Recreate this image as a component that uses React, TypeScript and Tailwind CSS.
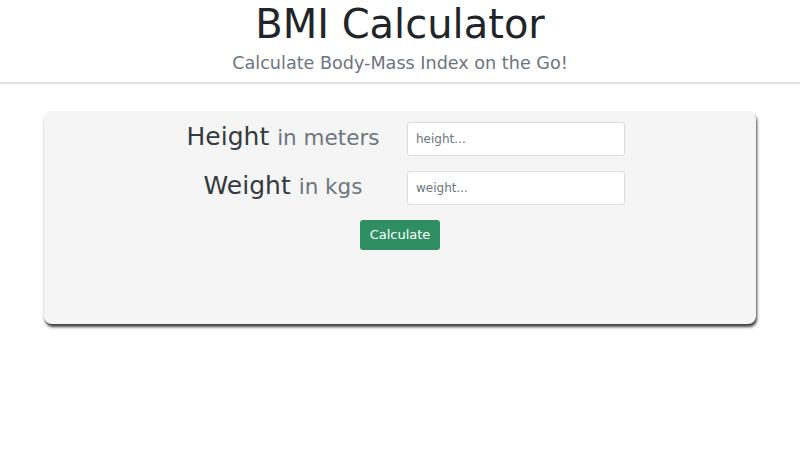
import React, { useState } from "react";

const App = () => {
  const [height, setHeight] = useState("");
  const [weight, setWeight] = useState("");

  return (
    <div className="min-h-screen bg-white font-['DejaVu_Sans',sans-serif]">
      <header className="text-center border-b-2 border-[#e0e0e0] pb-[4px]">
        <h1 className="text-[40px] leading-[48px] text-[#212529]">
          BMI Calculator
        </h1>
        <p className="text-[17.6px] leading-[30px] text-[#6c757d]">
          Calculate Body-Mass Index on the Go!
        </p>
      </header>

      <main className="mx-[44px] mt-[27px]">
        <div className="h-[213px] rounded-lg bg-[#f5f5f5] pt-[11px] shadow-[1px_3px_3px_rgba(0,0,0,0.75)]">
          <div className="flex items-center h-[34px]">
            <label className="ml-[119px] w-[240px] text-center text-[25px] leading-[30px] text-[#343a40] mb-[4px] whitespace-nowrap">
              Height <span className="text-[21.5px] text-[#6c757d]">in meters</span>
            </label>
            <input
              value={height}
              onChange={(e) => setHeight(e.target.value)}
              placeholder="height..."
              className="ml-[4px] w-[218px] h-[34px] bg-white border border-[#dcdcdc] rounded-[3px] px-[8px] text-[12px] text-[#495057] placeholder:text-[#6c757d] outline-none"
            />
          </div>
          <div className="flex items-center h-[34px] mt-[15px]">
            <label className="ml-[119px] w-[240px] text-center text-[25px] leading-[30px] text-[#343a40] mb-[4px] whitespace-nowrap">
              Weight <span className="text-[21.5px] text-[#6c757d]">in kgs</span>
            </label>
            <input
              value={weight}
              onChange={(e) => setWeight(e.target.value)}
              placeholder="weight..."
              className="ml-[4px] w-[218px] h-[34px] bg-white border border-[#dcdcdc] rounded-[3px] px-[8px] text-[12px] text-[#495057] placeholder:text-[#6c757d] outline-none"
            />
          </div>
          <button className="block mx-auto mt-[15px] w-[80px] h-[30px] rounded-[3px] bg-[#2f8f63] text-white text-[13px]">
            Calculate
          </button>
        </div>
      </main>
    </div>
  );
};

export default App;
